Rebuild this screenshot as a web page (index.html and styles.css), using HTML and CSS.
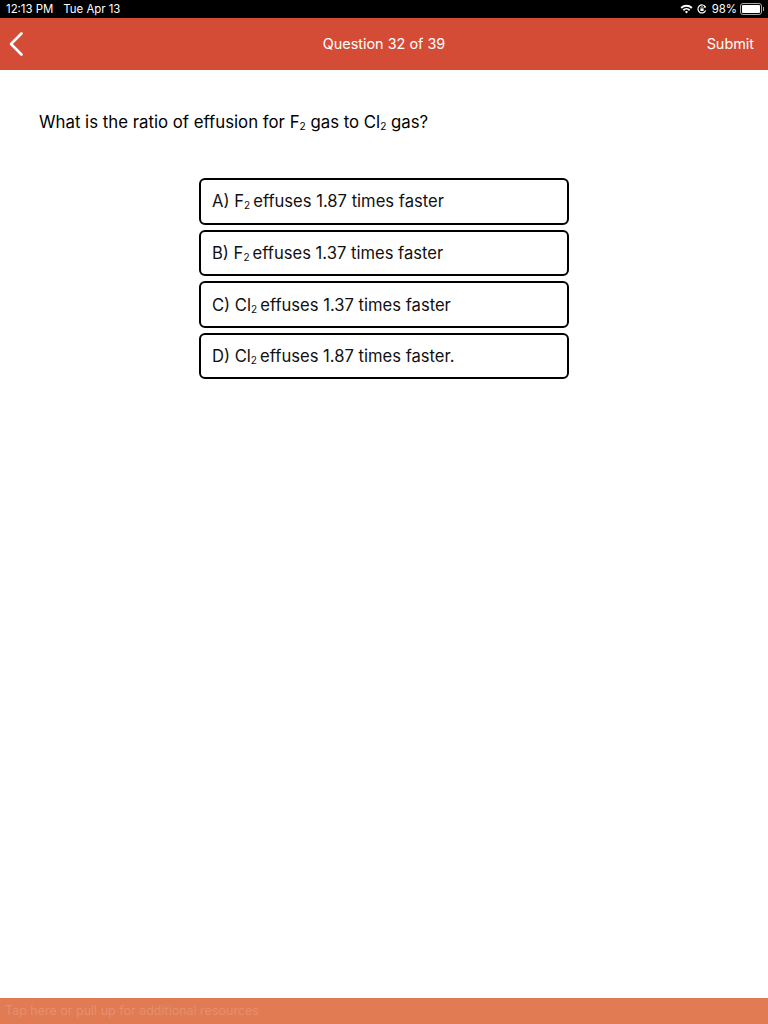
FILE: index.html
```html
<!DOCTYPE html>
<html lang="en">
<head>
    <meta charset="UTF-8">
    <meta name="viewport" content="width=device-width, initial-scale=1.0">
    <title>Question 32 of 39</title>
    <link rel="stylesheet" href="styles.css">
</head>
<body>
    <div class="page">
        <!-- Status bar -->
        <div class="status-bar">
            <div class="status-left">
                <span>12:13 PM</span>
                <span>Tue Apr 13</span>
            </div>
            <div class="status-right">
                <svg class="wifi" width="13" height="10" viewBox="0 0 13 10">
                    <path d="M0.5 3.3 A8.6 8.6 0 0 1 12.5 3.3 L11.2 4.7 A6.7 6.7 0 0 0 1.8 4.7 Z" fill="#fff"/>
                    <path d="M2.7 5.5 A5.4 5.4 0 0 1 10.3 5.5 L9 6.9 A3.5 3.5 0 0 0 4 6.9 Z" fill="#fff"/>
                    <path d="M4.9 7.7 A2.3 2.3 0 0 1 8.1 7.7 L6.5 9.5 Z" fill="#fff"/>
                </svg>
                <svg class="lock" width="10" height="10" viewBox="0 0 10 10">
                    <path d="M8.6 6.6 A4 4 0 1 1 8.4 2.9" fill="none" stroke="#fff" stroke-width="1.2"/>
                    <path d="M7.4 1.2 L9.4 3.4 L6.8 3.8 Z" fill="#fff"/>
                    <rect x="3.4" y="4.4" width="3.2" height="2.6" fill="#fff"/>
                    <path d="M4 4.4 V3.6 A1 1 0 0 1 6 3.6 V4.4" fill="none" stroke="#fff" stroke-width="0.7"/>
                </svg>
                <span>98%</span>
                <div class="battery">
                    <div class="battery-level"></div>
                </div>
                <div class="battery-tip"></div>
            </div>
        </div>

        <!-- Header -->
        <div class="header">
            <div class="header-back">
                <svg width="16" height="26" viewBox="0 0 16 26">
                    <path d="M13.5 2.5 L3 13 L13.5 23.5" fill="none" stroke="#fff" stroke-width="2.6" stroke-linecap="round" stroke-linejoin="round"/>
                </svg>
            </div>
            <div class="header-title">Question 32 of 39</div>
            <div class="header-submit">Submit</div>
        </div>

        <!-- Question -->
        <div class="content">
            <p class="question">What is the ratio of effusion for F<sub>2</sub> gas to Cl<sub>2</sub> gas?</p>
            <div class="answers">
                <div class="answer"><span>A) F<sub>2</sub> effuses 1.87 times faster</span></div>
                <div class="answer"><span>B) F<sub>2</sub> effuses 1.37 times faster</span></div>
                <div class="answer"><span>C) Cl<sub>2</sub> effuses 1.37 times faster</span></div>
                <div class="answer"><span>D) Cl<sub>2</sub> effuses 1.87 times faster.</span></div>
            </div>
        </div>

        <!-- Resources -->
        <div class="resources">Tap here or pull up for additional resources</div>
    </div>
</body>
</html>
```

FILE: styles.css
```css
body {
    margin: 0;
    padding: 0;
    background-color: white;
    font-family: Inter, "Liberation Sans", sans-serif;
}
sub {
    font-size: 0.6em;
    line-height: 0;
    vertical-align: -0.2em;
}
.page {
    height: 1024px;
    display: flex;
    flex-direction: column;
}
.status-bar {
    height: 18px;
    flex: none;
    background-color: black;
    color: white;
    font-size: 11.4px;
    display: flex;
    justify-content: space-between;
    align-items: center;
    padding: 0 4px 0 6px;
}
.status-left {
    display: flex;
    gap: 10px;
}
.status-right {
    display: flex;
    align-items: center;
}
.wifi {
    margin-right: 4px;
}
.lock {
    margin-right: 5px;
}
.battery {
    width: 18px;
    height: 8px;
    margin-left: 3px;
    padding: 1px;
    border: 1px solid #aaa;
    border-radius: 3px;
}
.battery-level {
    width: 100%;
    height: 100%;
    background-color: white;
    border-radius: 1px;
}
.battery-tip {
    width: 1px;
    height: 4px;
    margin-left: 1px;
    background-color: #aaa;
}
.header {
    height: 51px;
    flex: none;
    background-color: #d44c35;
    color: white;
    font-size: 14.4px;
    display: flex;
    align-items: center;
    justify-content: space-between;
    padding: 0 14px 1px 8px;
}
.header-back {
    width: 66px;
    display: flex;
}
.header-submit {
    width: 60px;
    text-align: right;
}
.content {
    flex: 1;
    padding: 41px 39px 0;
}
.question {
    margin: 0 0 45px;
    font-size: 16.8px;
    line-height: 22px;
    color: black;
}
.answers {
    width: 370px;
    margin: 0 auto;
    display: flex;
    flex-direction: column;
    gap: 5.17px;
}
.answer {
    height: 46.5px;
    box-sizing: border-box;
    border: 2px solid black;
    border-radius: 6px;
    padding: 0 11px;
    display: flex;
    align-items: center;
    font-size: 16.6px;
    color: #111;
}
.answer sub {
    margin-right: -1.5px;
}
.resources {
    height: 26px;
    flex: none;
    background-color: #e07b54;
    color: #e68f6e;
    font-size: 12.5px;
    line-height: 26px;
    padding-left: 5px;
}
```
